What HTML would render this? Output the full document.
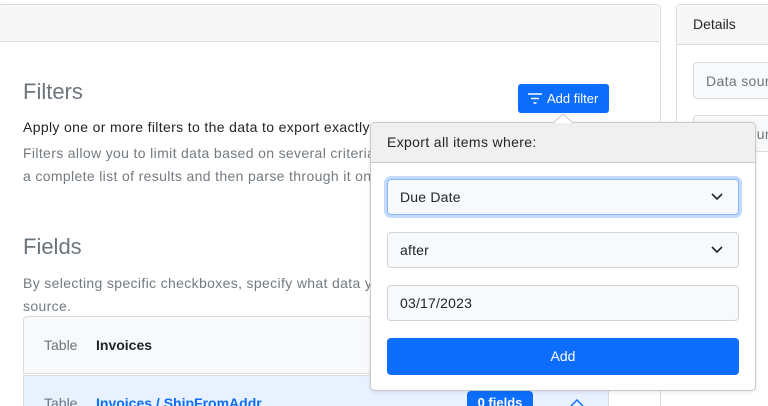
<!DOCTYPE html>
<html style="overflow:hidden;height:406px"><head><style>
*{box-sizing:border-box;margin:0;padding:0}
body{width:768px;height:406px;overflow:hidden;background:#fff;font-family:"Liberation Sans",sans-serif;position:relative;color:#212529}
.abs{position:absolute}
.sel{position:absolute;left:387px;width:352px;height:36px;border:1px solid #ced4da;border-radius:4px;background:#f8f9fa;font-size:14px;padding:0 12px;line-height:34px;color:#212529;letter-spacing:.2px}
.chev{position:absolute;right:14px;top:11px}
.t{letter-spacing:.35px}
</style></head><body>
<div class="abs" style="left:-2px;top:4px;width:663px;height:410px;border:1px solid #dcdcdc;border-radius:4px"></div>
<div class="abs" style="left:0;top:5px;width:659px;height:37px;background:#f7f7f7;border-bottom:1px solid #dcdcdc"></div>
<div class="abs" style="left:23px;top:79px;font-size:22px;color:#6c757d">Filters</div>
<div class="abs t" style="left:23px;top:119px;font-size:14px;color:#212529;white-space:nowrap">Apply one or more filters to the data to export exactly</div>
<div class="abs t" style="left:23px;top:142px;font-size:14px;color:#737a80;line-height:23px;white-space:nowrap">Filters allow you to limit data based on several criteria<br>a complete list of results and then parse through it on</div>
<div class="abs" style="left:518px;top:84px;width:91px;height:29px;background:#0d6efd;border-radius:3px;color:#fff;font-size:13px;line-height:29px;padding-left:29px">Add filter</div>
<svg class="abs" style="left:527px;top:92px" width="16" height="13"><path d="M1 2h14M4 6.5h8M6.5 11h3" stroke="#fff" stroke-width="1.6"/></svg>
<div class="abs" style="left:23px;top:234px;font-size:22px;color:#6c757d">Fields</div>
<div class="abs t" style="left:23px;top:272px;font-size:14px;color:#737a80;line-height:23px;white-space:nowrap">By selecting specific checkboxes, specify what data yo<br>source.</div>
<div class="abs" style="left:23px;top:316px;width:586px;height:58px;background:#f8f9fa;border:1px solid #dcdcdc;border-radius:4px 4px 0 0"></div>
<div class="abs" style="left:44px;top:337px;font-size:14px;color:#6c757d">Table</div>
<div class="abs" style="left:96px;top:337px;font-size:14px;font-weight:bold;color:#212529">Invoices</div>
<div class="abs" style="left:23px;top:375px;width:586px;height:40px;background:#e7f1ff;border:1px solid #dcdcdc"></div>
<div class="abs" style="left:44px;top:395px;font-size:14px;color:#6c757d">Table</div>
<div class="abs" style="left:96px;top:395px;font-size:14px;font-weight:bold;color:#0d6efd">Invoices / ShipFromAddr</div>
<div class="abs" style="left:467px;top:391px;width:66px;height:24px;background:#0d6efd;border-radius:4px;color:#fff;font-size:13px;font-weight:bold;text-align:center;line-height:24px">0 fields</div>
<svg class="abs" style="left:569px;top:398px" width="16" height="10"><path d="M2 8l6-6 6 6" stroke="#0d6efd" fill="none" stroke-width="1.5"/></svg>
<div class="abs" style="left:676px;top:4px;width:100px;height:148px;border:1px solid #dcdcdc;border-radius:4px"></div>
<div class="abs" style="left:677px;top:5px;width:91px;height:40px;background:#f7f7f7;border-bottom:1px solid #dcdcdc"></div>
<div class="abs" style="left:693px;top:16px;font-size:14px;color:#212529">Details</div>
<div class="abs t" style="left:693px;top:62px;width:90px;height:37px;border:1px solid #dcdcdc;border-radius:4px;background:#f8f9fa;font-size:14px;color:#6c757d;padding:10px 12px;white-space:nowrap">Data source</div>
<div class="abs t" style="left:693px;top:115px;width:90px;height:37px;border:1px solid #dcdcdc;border-radius:4px;background:#f8f9fa;font-size:14px;color:#6c757d;padding:10px 12px;white-space:nowrap">Data source</div>
<div class="abs" style="left:370px;top:122px;width:386px;height:269px;background:#fff;border:1px solid #c8c8c8;border-radius:5px;box-shadow:0 1px 4px rgba(0,0,0,.1)"></div>
<div class="abs t" style="left:371px;top:123px;width:384px;height:40px;background:#f0f0f0;border-bottom:1px solid #c8c8c8;border-radius:5px 5px 0 0;font-size:14px;line-height:38px;padding-left:16px;color:#212529">Export all items where:</div>
<svg class="abs" style="left:553px;top:113px" width="20" height="11"><path d="M0 10L10 1L20 10" fill="#fff" stroke="#c8c8c8"/></svg>
<div class="sel" style="top:179px;border-color:#86b7fe;box-shadow:0 0 0 3px #c2dbfe">Due Date<svg class="chev" width="14" height="10"><path d="M2 3l5 5 5-5" stroke="#212529" fill="none" stroke-width="1.6"/></svg></div>
<div class="sel" style="top:232px">after<svg class="chev" width="14" height="10"><path d="M2 3l5 5 5-5" stroke="#212529" fill="none" stroke-width="1.6"/></svg></div>
<div class="sel" style="top:285px">03/17/2023</div>
<div class="abs" style="left:387px;top:338px;width:352px;height:37px;background:#0d6efd;border-radius:4px;color:#fff;font-size:14px;text-align:center;line-height:37px">Add</div>
</body></html>
